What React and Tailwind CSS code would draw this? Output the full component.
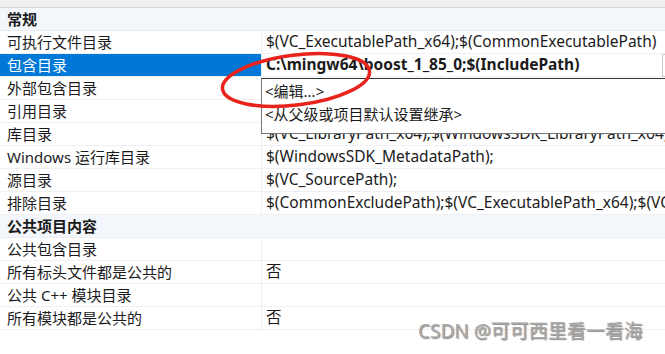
import React from "react";

const rows = [
  { type: "header", label: "常规" },
  { label: "可执行文件目录", value: "$(VC_ExecutablePath_x64);$(CommonExecutablePath)" },
  { label: "包含目录", value: "C:\\mingw64\\boost_1_85_0;$(IncludePath)", selected: true },
  { label: "外部包含目录", value: "" },
  { label: "引用目录", value: "" },
  { label: "库目录", value: "$(VC_LibraryPath_x64);$(WindowsSDK_LibraryPath_x64)" },
  { label: "Windows 运行库目录", value: "$(WindowsSDK_MetadataPath);" },
  { label: "源目录", value: "$(VC_SourcePath);" },
  { label: "排除目录", value: "$(CommonExcludePath);$(VC_ExecutablePath_x64);$(VC_LibraryPath_x64)" },
  { type: "header", label: "公共项目内容" },
  { label: "公共包含目录", value: "" },
  { label: "所有标头文件都是公共的", value: "否" },
  { label: "公共 C++ 模块目录", value: "" },
  { label: "所有模块都是公共的", value: "否" },
];

const font = { fontFamily: '"Noto Sans", "Noto Sans CJK SC", sans-serif' };

const Row = ({ row }) => {
  if (row.type === "header") {
    return (
      <div className="h-[23px] flex items-center px-[7px] bg-[#f3f6fa] border-b border-[#e9ecf0] font-bold text-[15px] text-[#1b1b1b]">
        {row.label}
      </div>
    );
  }
  return (
    <div className="h-[23px] grid grid-cols-[261px_1fr] border-b border-[#eef0f3]">
      <div
        className={
          "flex items-center px-[7px] whitespace-nowrap text-[15px] " +
          (row.selected ? "bg-[#0078d7] text-white" : "bg-white text-[#1b1b1b]")
        }
      >
        {row.label}
      </div>
      <div
        className={
          "flex items-center pl-[4px] whitespace-nowrap overflow-hidden border-l border-[#eceef2] text-[15.5px] text-[#1b1b1b] " +
          (row.selected ? "font-bold" : "")
        }
      >
        {row.value}
      </div>
    </div>
  );
};

export default function App() {
  return (
    <div className="relative w-[665px] h-[354px] overflow-hidden bg-white leading-none" style={font}>
      <div className="h-[8px] bg-[#f0f0f0] border-b border-[#d4d4d4]" />
      <div className="flex flex-col">
        {rows.map((r, i) => (
          <Row key={i} row={r} />
        ))}
      </div>

      {/* dropdown button on the selected row */}
      <div className="absolute left-[662px] top-[54px] w-[20px] h-[23px] bg-white border border-[#c8c8c8]" />

      {/* dropdown popup */}
      <div className="absolute left-[261px] top-[78px] w-[420px] h-[56px] bg-white border border-[#767676] border-t-dotted border-t-[#333] text-[15px] text-[#1b1b1b]">
        <div className="h-[23px] flex items-center pl-[3px] mt-[1px]">&lt;编辑...&gt;</div>
        <div className="h-[23px] flex items-center pl-[3px]">&lt;从父级或项目默认设置继承&gt;</div>
      </div>

      {/* red annotation ellipse */}
      <svg className="absolute left-0 top-0" width="665" height="354" viewBox="0 0 665 354">
        <ellipse
          cx="296"
          cy="80"
          rx="74"
          ry="25"
          transform="rotate(-7 296 80)"
          fill="none"
          stroke="#e8231b"
          strokeWidth="3.5"
        />
      </svg>

      {/* watermark */}
      <div
        className="absolute left-[418px] top-[322px] text-[19px] text-[#a8a8a8] whitespace-nowrap"
        style={{ textShadow: "1px 1px 1px #8a8a8a" }}
      >
        CSDN @可可西里看一看海
      </div>
    </div>
  );
}
